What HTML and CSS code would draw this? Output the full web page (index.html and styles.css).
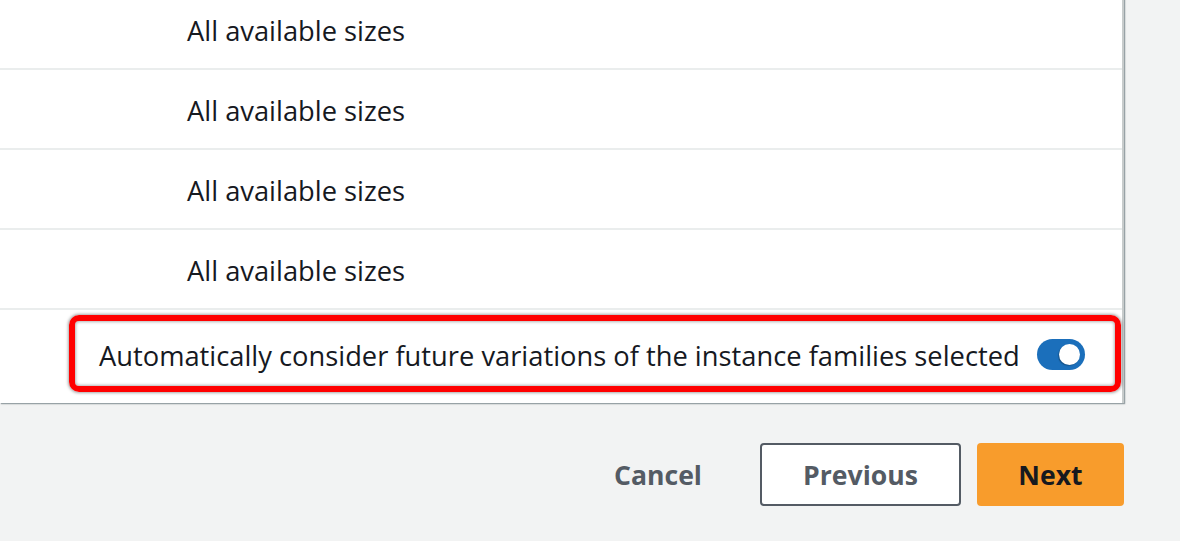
FILE: index.html
```html
<!DOCTYPE html>
<html>
<head>
<meta charset="utf-8">
<link rel="stylesheet" href="styles.css">
</head>
<body>
<div class="panel">
  <div class="row"><span class="cell">All available sizes</span></div>
  <div class="row"><span class="cell">All available sizes</span></div>
  <div class="row"><span class="cell">All available sizes</span></div>
  <div class="row"><span class="cell">All available sizes</span></div>
  <div class="toggle-row">
    <div class="highlight">
      <span class="label">Automatically consider future variations of the instance families selected</span>
      <span class="toggle"><span class="knob"></span></span>
    </div>
  </div>
</div>
<div class="actions">
  <button class="btn btn-link">Cancel</button>
  <button class="btn btn-normal">Previous</button>
  <button class="btn btn-primary">Next</button>
</div>
</body>
</html>
```
FILE: styles.css
```css
html, body {
  margin: 0;
  padding: 0;
}
body {
  background: #f2f3f3;
  font-family: "Open Sans", "Noto Sans", sans-serif;
  color: #16191f;
  width: 1180px;
  height: 541px;
  overflow: hidden;
}
.panel {
  width: 1124px;
  margin-top: -10px;
  background: #fff;
  box-shadow: 1px 1px 1px 0 rgba(0, 28, 36, 0.3), 1px 1px 2px 0 rgba(0, 28, 36, 0.15);
  border-right: 2px solid #c8cccc;
  box-sizing: border-box;
}
.row {
  height: 80px;
  box-sizing: border-box;
  border-bottom: 2px solid #eaeded;
  display: flex;
  align-items: center;
  padding-left: 187px;
  padding-top: 4px;
}
.cell {
  font-size: 27.3px;
  line-height: 36px;
}
.toggle-row {
  padding: 5px 1px 11px 69px;
}
.highlight {
  height: 77px;
  box-sizing: border-box;
  border: 6px solid #ff0000;
  border-radius: 10px;
  box-shadow: 0 0 3px 1px rgba(0, 0, 0, 0.35), inset 0 0 3px 1px rgba(0, 0, 0, 0.3);
  display: flex;
  align-items: center;
  padding-left: 24px;
  padding-top: 5px;
  gap: 17px;
}
.label {
  font-size: 27.3px;
  line-height: 36px;
  white-space: nowrap;
}
.toggle {
  width: 48px;
  height: 31px;
  border-radius: 16px;
  background: #1b6fbb;
  display: flex;
  align-items: center;
  justify-content: flex-end;
  padding-right: 5px;
  box-sizing: border-box;
  margin-top: -3px;
}
.knob {
  width: 21px;
  height: 21px;
  border-radius: 50%;
  background: #fff;
  box-shadow: -1px 1px 1px rgba(0, 0, 0, 0.25);
}
.actions {
  width: 1124px;
  display: flex;
  justify-content: flex-end;
  align-items: center;
  gap: 16px;
  margin-top: 40px;
}
.btn {
  font-family: "Open Sans", "Noto Sans", sans-serif;
  font-weight: 700;
  font-size: 26.6px;
  height: 63px;
  box-sizing: border-box;
  border-radius: 4px;
  padding: 0;
  cursor: pointer;
}
.btn-link {
  background: transparent;
  border: none;
  color: #545b64;
  margin-right: 42px;
}
.btn-normal {
  width: 201px;
  background: #fff;
  border: 2px solid #545b64;
  color: #545b64;
}
.btn-primary {
  width: 147px;
  background: #f89c2c;
  border: none;
  color: #16191f;
}
```
